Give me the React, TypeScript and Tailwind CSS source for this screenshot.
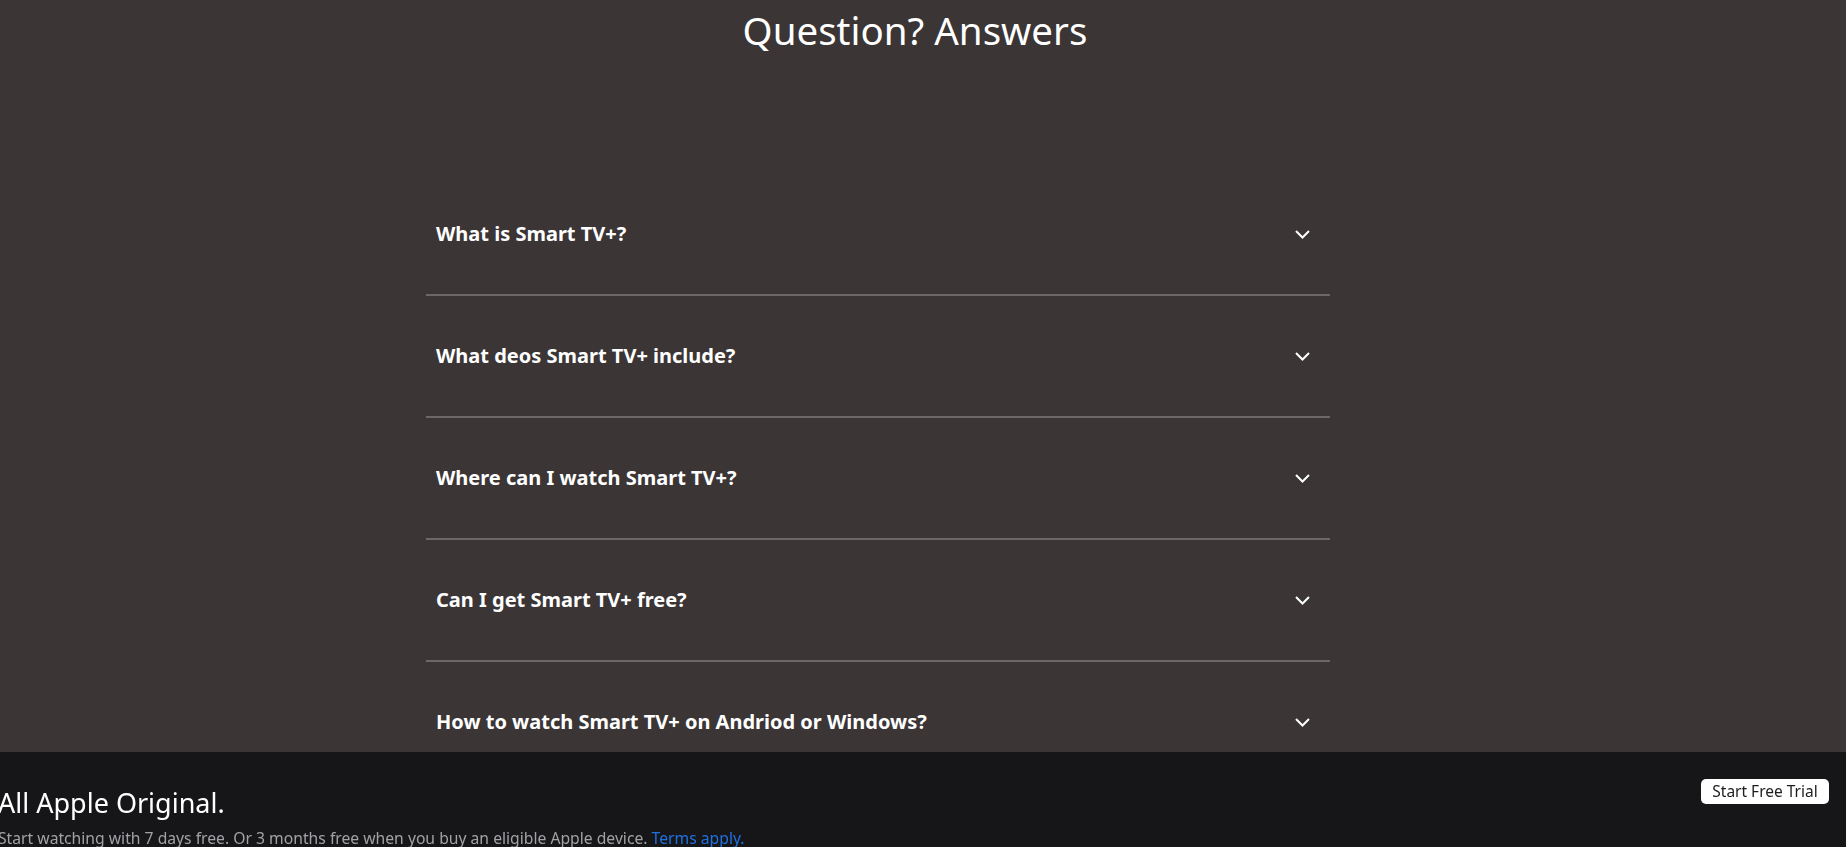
import React, { useState } from "react"

const questions = [
  "What is Smart TV+?",
  "What deos Smart TV+ include?",
  "Where can I watch Smart TV+?",
  "Can I get Smart TV+ free?",
  "How to watch Smart TV+ on Andriod or Windows?",
]

function Chevron({ open }: { open: boolean }) {
  return (
    <svg
      width="15"
      height="9"
      viewBox="0 0 15 9"
      className={open ? "rotate-180" : ""}
      fill="none"
      stroke="white"
      strokeWidth="2"
    >
      <polyline points="1,1 7.5,7.5 14,1" />
    </svg>
  )
}

export default function App() {
  const [open, setOpen] = useState<number | null>(null)

  return (
    <div
      className="min-h-[847px] bg-[#3b3536] text-white"
      style={{ fontFamily: '"Noto Sans", "Noto Sans CJK KR", sans-serif' }}
    >
      <h1 className="pt-[5px] pr-[16px] text-center text-[38.5px] leading-[50px] font-normal">Question? Answers</h1>

      <div className="mt-[119px] ml-[426px] w-[904px] pb-[40px]">
        {questions.map((q, i) => (
          <div key={q} className="border-b-2 border-[#6c6869]">
            <button
              onClick={() => setOpen(open === i ? null : i)}
              className="flex h-[120px] w-full items-center justify-between pl-[10px] pr-[20px] text-left"
            >
              <span className="text-[20px] font-bold">{q}</span>
              <Chevron open={open === i} />
            </button>
          </div>
        ))}
      </div>

      <footer className="fixed right-0 bottom-0 left-0 flex h-[95px] items-start justify-between bg-[#161618]">
        <div className="-ml-[2px] pt-[34px]">
          <h2 className="text-[27px] leading-[34px] font-normal">All Apple Original.</h2>
          <p className="mt-[7px] text-[15.7px] leading-[22px] text-[#a1a1a6]">
            Start watching with 7 days free. Or 3 months free when you buy an eligible Apple device.{" "}
            <a className="text-[#2070e0]">Terms apply.</a>
          </p>
        </div>
        <button className="mt-[27px] mr-[17px] h-[25px] w-[128px] rounded-[5px] bg-white text-[15.5px] leading-[25px] text-[#1d1d1f]">
          Start Free Trial
        </button>
      </footer>
    </div>
  )
}
